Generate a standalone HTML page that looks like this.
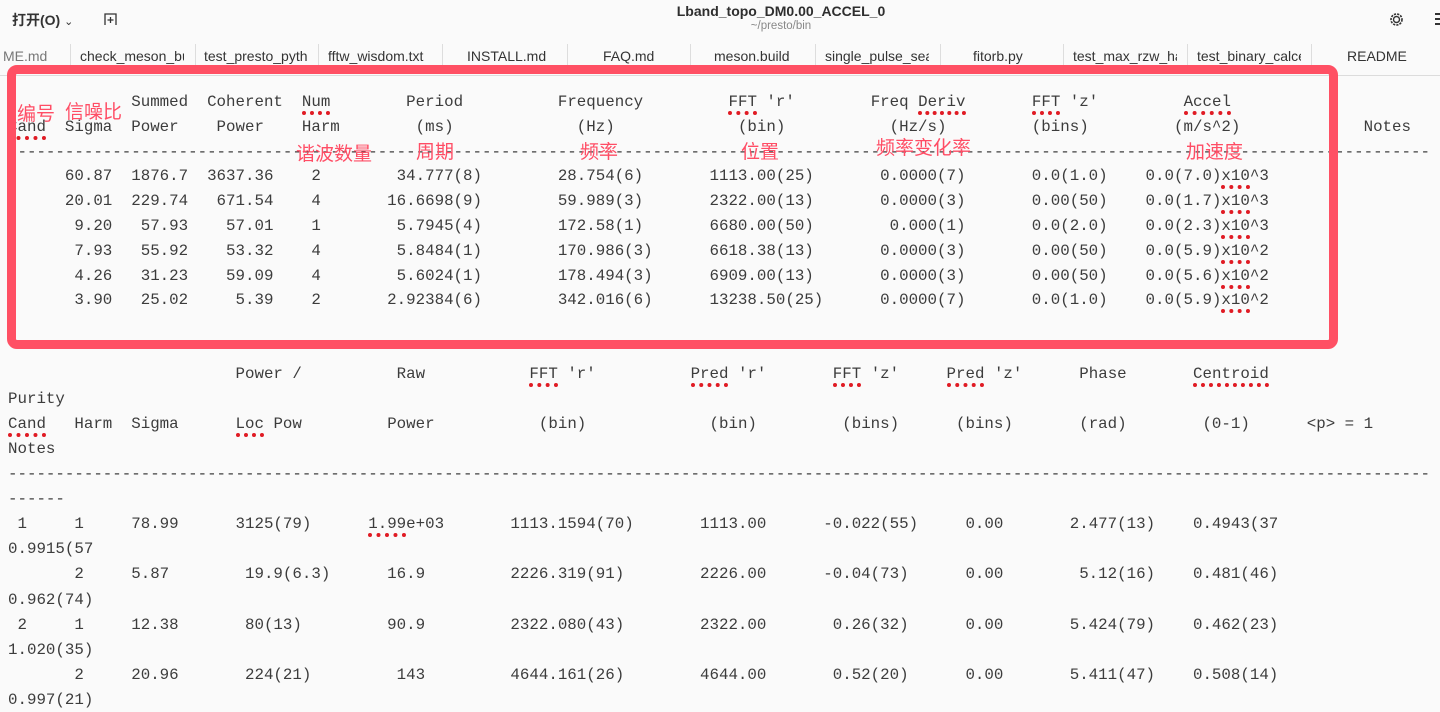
<!DOCTYPE html>
<html><head><meta charset="utf-8"><style>
*{margin:0;padding:0;box-sizing:border-box}
body{width:1440px;height:710px;overflow:hidden;background:#fafafa;position:relative;font-family:"Liberation Sans","Noto Sans CJK SC",sans-serif;color:#3c3c3c}
.hdr{position:absolute;left:0;top:0;width:1440px;height:40px;background:#fafafa}
.tabs{position:absolute;left:0;top:40px;width:1440px;height:36px;background:#fafafa;border-bottom:1px solid #dcdcdc}
.tab{position:absolute;top:8px;font-size:14px;color:#333;white-space:nowrap;overflow:hidden}
.sep{position:absolute;top:4px;width:1px;height:26px;background:#ddd}
.m{position:absolute;font-family:"Liberation Mono",monospace;font-size:15.8px;white-space:pre;line-height:24px;color:#3c3c3c}
.d{border-bottom:4px dotted #e01b24;padding-bottom:0}
.cn{position:absolute;font-family:"Noto Sans CJK SC",sans-serif;font-size:19px;color:#ff4d65;line-height:24px;white-space:nowrap}
.box{position:absolute;left:7px;top:65px;width:1331px;height:284px;border:9px solid #ff5064;border-radius:10px}
</style></head><body>
<div class="hdr">
<div style="position:absolute;left:12px;top:10px;font-size:14px;font-weight:bold;color:#333">打开(O) <span style="font-weight:normal;font-size:11px">&#8964;</span></div>
<svg style="position:absolute;left:103px;top:12px" width="15" height="15" viewBox="0 0 15 15"><path d="M2 13V2h11v11" fill="none" stroke="#333" stroke-width="1.3"/><path d="M7.5 5v6M4.5 8h6" stroke="#333" stroke-width="1.3"/></svg>
<div style="position:absolute;left:0;width:1562px;text-align:center;top:3px;font-size:14px;font-weight:bold;color:#2e2e2e">Lband_topo_DM0.00_ACCEL_0</div>
<div style="position:absolute;left:0;width:1562px;text-align:center;top:20px;font-size:11.5px;color:#888">~/presto/bin</div>
<svg style="position:absolute;left:1388px;top:11px" width="17" height="17" viewBox="0 0 17 17"><circle cx="8.5" cy="8.5" r="5.5" fill="none" stroke="#333" stroke-width="1.6" stroke-dasharray="2.2 1.1"/><circle cx="8.5" cy="8.5" r="3" fill="none" stroke="#333" stroke-width="1.4"/></svg>
<div style="position:absolute;left:1435px;top:13px;width:8px;height:2px;background:#333;box-shadow:0 5px #333,0 10px #333"></div>
</div>
<div class="tabs">
<div class="tab" style="left:3px;width:50px;color:#777">ME.md</div><div class="sep" style="left:70px"></div>
<div class="tab" style="left:80px;width:104px">check_meson_build</div><div class="sep" style="left:195px"></div>
<div class="tab" style="left:204px;width:104px">test_presto_python</div><div class="sep" style="left:318px"></div>
<div class="tab" style="left:328px;width:110px">fftw_wisdom.txt</div><div class="sep" style="left:442px"></div>
<div class="tab" style="left:467px">INSTALL.md</div><div class="sep" style="left:567px"></div>
<div class="tab" style="left:603px">FAQ.md</div><div class="sep" style="left:690px"></div>
<div class="tab" style="left:714px">meson.build</div><div class="sep" style="left:815px"></div>
<div class="tab" style="left:825px;width:104px">single_pulse_search</div><div class="sep" style="left:940px"></div>
<div class="tab" style="left:973px">fitorb.py</div><div class="sep" style="left:1063px"></div>
<div class="tab" style="left:1073px;width:104px">test_max_rzw_harmonics</div><div class="sep" style="left:1187px"></div>
<div class="tab" style="left:1197px;width:104px">test_binary_calceph</div><div class="sep" style="left:1311px"></div>
<div class="tab" style="left:1347px">README</div>
</div>

<!-- table 1 -->
<div class="m" style="left:8px;top:90px">             Summed  Coherent  <span class="d">Num</span>        Period          Frequency         <span class="d">FFT</span> 'r'        Freq <span class="d">Deriv</span>       <span class="d">FFT</span> 'z'         <span class="d">Accel</span></div>
<div class="m" style="left:8px;top:115px"><span class="d">Cand</span>  Sigma  Power    Power    Harm        (ms)             (Hz)             (bin)           (Hz/s)         (bins)         (m/s^2)             Notes</div>
<div class="m" style="left:8px;top:140px">------------------------------------------------------------------------------------------------------------------------------------------------------</div>
<div class="m" style="left:8px;top:164px">      60.87  1876.7  3637.36    2        34.777(8)        28.754(6)       1113.00(25)       0.0000(7)       0.0(1.0)    0.0(7.0)<span class="d">x10</span>^3</div>
<div class="m" style="left:8px;top:189px">      20.01  229.74   671.54    4       16.6698(9)        59.989(3)       2322.00(13)       0.0000(3)       0.00(50)    0.0(1.7)<span class="d">x10</span>^3</div>
<div class="m" style="left:8px;top:214px">       9.20   57.93    57.01    1        5.7945(4)        172.58(1)       6680.00(50)        0.000(1)       0.0(2.0)    0.0(2.3)<span class="d">x10</span>^3</div>
<div class="m" style="left:8px;top:239px">       7.93   55.92    53.32    4        5.8484(1)        170.986(3)      6618.38(13)       0.0000(3)       0.00(50)    0.0(5.9)<span class="d">x10</span>^2</div>
<div class="m" style="left:8px;top:264px">       4.26   31.23    59.09    4        5.6024(1)        178.494(3)      6909.00(13)       0.0000(3)       0.00(50)    0.0(5.6)<span class="d">x10</span>^2</div>
<div class="m" style="left:8px;top:288px">       3.90   25.02     5.39    2       2.92384(6)        342.016(6)      13238.50(25)      0.0000(7)       0.0(1.0)    0.0(5.9)<span class="d">x10</span>^2</div>

<div class="box"></div>
<div class="cn" style="left:17px;top:101px">编号</div>
<div class="cn" style="left:65px;top:99px">信噪比</div>
<div class="cn" style="left:296px;top:141px">谐波数量</div>
<div class="cn" style="left:416px;top:139px">周期</div>
<div class="cn" style="left:580px;top:139px">频率</div>
<div class="cn" style="left:741px;top:139px">位置</div>
<div class="cn" style="left:876px;top:135px">频率变化率</div>
<div class="cn" style="left:1186px;top:139px">加速度</div>

<!-- table 2 -->
<div class="m" style="left:8px;top:362px">                        Power /          Raw           <span class="d">FFT</span> 'r'          <span class="d">Pred</span> 'r'       <span class="d">FFT</span> 'z'     <span class="d">Pred</span> 'z'      Phase       <span class="d">Centroid</span></div>
<div class="m" style="left:8px;top:387px">Purity</div>
<div class="m" style="left:8px;top:412px"><span class="d">Cand</span>   Harm  Sigma      <span class="d">Loc</span> Pow         Power           (bin)             (bin)         (bins)      (bins)       (rad)        (0-1)      &lt;p&gt; = 1</div>
<div class="m" style="left:8px;top:437px">Notes</div>
<div class="m" style="left:8px;top:462px">------------------------------------------------------------------------------------------------------------------------------------------------------</div>
<div class="m" style="left:8px;top:487px">------</div>
<div class="m" style="left:8px;top:512px"> 1     1     78.99      3125(79)      <span class="d">1.99</span>e+03       1113.1594(70)       1113.00      -0.022(55)     0.00       2.477(13)    0.4943(37</div>
<div class="m" style="left:8px;top:537px">0.9915(57</div>
<div class="m" style="left:8px;top:562px">       2     5.87        19.9(6.3)      16.9         2226.319(91)        2226.00      -0.04(73)      0.00        5.12(16)    0.481(46)</div>
<div class="m" style="left:8px;top:588px">0.962(74)</div>
<div class="m" style="left:8px;top:613px"> 2     1     12.38       80(13)         90.9         2322.080(43)        2322.00       0.26(32)      0.00       5.424(79)    0.462(23)</div>
<div class="m" style="left:8px;top:638px">1.020(35)</div>
<div class="m" style="left:8px;top:663px">       2     20.96       224(21)         143         4644.161(26)        4644.00       0.52(20)      0.00       5.411(47)    0.508(14)</div>
<div class="m" style="left:8px;top:688px">0.997(21)</div>
</body></html>
